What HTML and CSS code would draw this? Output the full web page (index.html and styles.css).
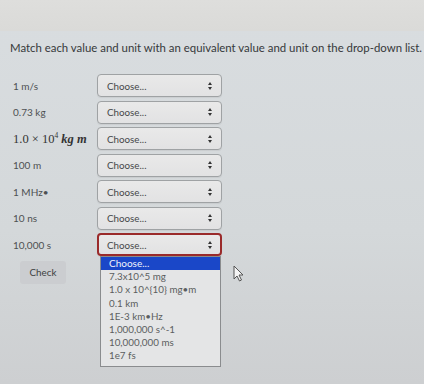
FILE: index.html
```html
<!DOCTYPE html>
<html>
<head>
<meta charset="utf-8">
<link rel="stylesheet" href="styles.css">
</head>
<body>
<div class="top"></div>
<div class="page">
  <p class="question">Match each value and unit with an equivalent value and unit on the drop-down list.</p>
  <div class="rows">
    <div class="row"><span class="label">1 m/s</span><div class="sel"><span>Choose...</span><span class="arr"></span></div></div>
    <div class="row"><span class="label">0.73 kg</span><div class="sel"><span>Choose...</span><span class="arr"></span></div></div>
    <div class="row"><span class="label math">1.0 × 10<sup>4</sup> <b>kg m</b></span><div class="sel"><span>Choose...</span><span class="arr"></span></div></div>
    <div class="row"><span class="label">100 m</span><div class="sel"><span>Choose...</span><span class="arr"></span></div></div>
    <div class="row"><span class="label">1 MHz•</span><div class="sel"><span>Choose...</span><span class="arr"></span></div></div>
    <div class="row"><span class="label">10 ns</span><div class="sel"><span>Choose...</span><span class="arr"></span></div></div>
    <div class="row"><span class="label">10,000 s</span><div class="sel focus"><span>Choose...</span><span class="arr"></span>
      <ul class="menu">
        <li class="hl">Choose...</li>
        <li>7.3x10^5 mg</li>
        <li>1.0 x 10^{10} mg•m</li>
        <li>0.1 km</li>
        <li>1E-3 km•Hz</li>
        <li>1,000,000 s^-1</li>
        <li>10,000,000 ms</li>
        <li>1e7 fs</li>
      </ul>
    </div></div>
  </div>
  <button class="check">Check</button>
  <svg class="cursor" width="11" height="17" viewBox="0 0 11 17"><path d="M1 1 L1 14 L4 11 L6.5 16 L8.5 15 L6 10 L10 10 Z" fill="#f4f4f4" stroke="#555" stroke-width="1"/></svg>
</div>
</body>
</html>
```
FILE: styles.css
```css
html, body { margin: 0; padding: 0; }
body {
  width: 424px;
  height: 384px;
  overflow: hidden;
  font-family: Lato, "Open Sans", sans-serif;
  color: #3e4244;
  background: linear-gradient(180deg, #d9dde0 0%, #d4d8da 60%, #cdcfd1 100%);
  position: relative;
}
.top {
  height: 31px;
  background: linear-gradient(180deg, #dededc, #dadad8);
}
.page {
  padding: 10px 0 0 10px;
  position: relative;
}
.question {
  margin: 0;
  font-size: 11.4px;
  color: #36393b;
  white-space: nowrap;
}
.rows {
  margin-top: 20px;
  display: flex;
  flex-direction: column;
  gap: 3px;
}
.row {
  display: flex;
  align-items: center;
  height: 23.5px;
}
.label {
  width: 87px;
  padding-left: 3px;
  box-sizing: border-box;
  font-size: 10px;
  color: #4d5052;
}
.label.math {
  font-family: "Liberation Serif", serif;
  font-size: 12.5px;
  color: #333;
  padding-left: 3px;
  white-space: nowrap;
}
.label.math sup { font-size: 7.5px; }
.label.math b { font-weight: bold; font-style: italic; }
.sel {
  position: relative;
  width: 125px;
  height: 23px;
  box-sizing: border-box;
  border: 1px solid #9fa2a4;
  border-radius: 4px;
  background: linear-gradient(180deg, #e9e9e9, #e2e2e3);
  display: flex;
  align-items: center;
  justify-content: space-between;
  padding: 0 8px 0 9px;
  font-size: 9.8px;
  color: #454749;
  box-shadow: 0 1px 1px rgba(0,0,0,0.06);
}
.sel.focus {
  border: 2px solid #9a2a2a;
  padding: 0 7px 0 8px;
}
.arr {
  width: 5px;
  height: 8px;
  position: relative;
}
.arr::before, .arr::after {
  content: "";
  position: absolute;
  left: 0;
  border-left: 2.5px solid transparent;
  border-right: 2.5px solid transparent;
}
.arr::before { top: 0; border-bottom: 3px solid #333; }
.arr::after { bottom: 0; border-top: 3px solid #333; }
.menu {
  position: absolute;
  left: 1px;
  top: 21px;
  width: 121px;
  margin: 0;
  padding: 0 0 3px;
  list-style: none;
  background: #e4e5e6;
  border: 1px solid #8a8c8e;
  box-sizing: border-box;
  z-index: 2;
}
.menu li {
  font-size: 9.8px;
  height: 13.2px;
  line-height: 13.2px;
  padding-left: 8px;
  color: #5b5e60;
  white-space: nowrap;
}
.menu li.hl {
  background: #1a47c8;
  color: #f2f4fb;
  font-size: 10px;
  height: 13px;
  line-height: 13px;
}
.check {
  margin: 4px 0 0 10px;
  width: 46px;
  height: 23px;
  border: none;
  border-radius: 3px;
  background: #cbcdd0;
  font-family: Lato, "Open Sans", sans-serif;
  font-size: 9.8px;
  color: #3c3f41;
  padding: 0;
}
.cursor {
  position: absolute;
  left: 233px;
  top: 234px;
}
```
